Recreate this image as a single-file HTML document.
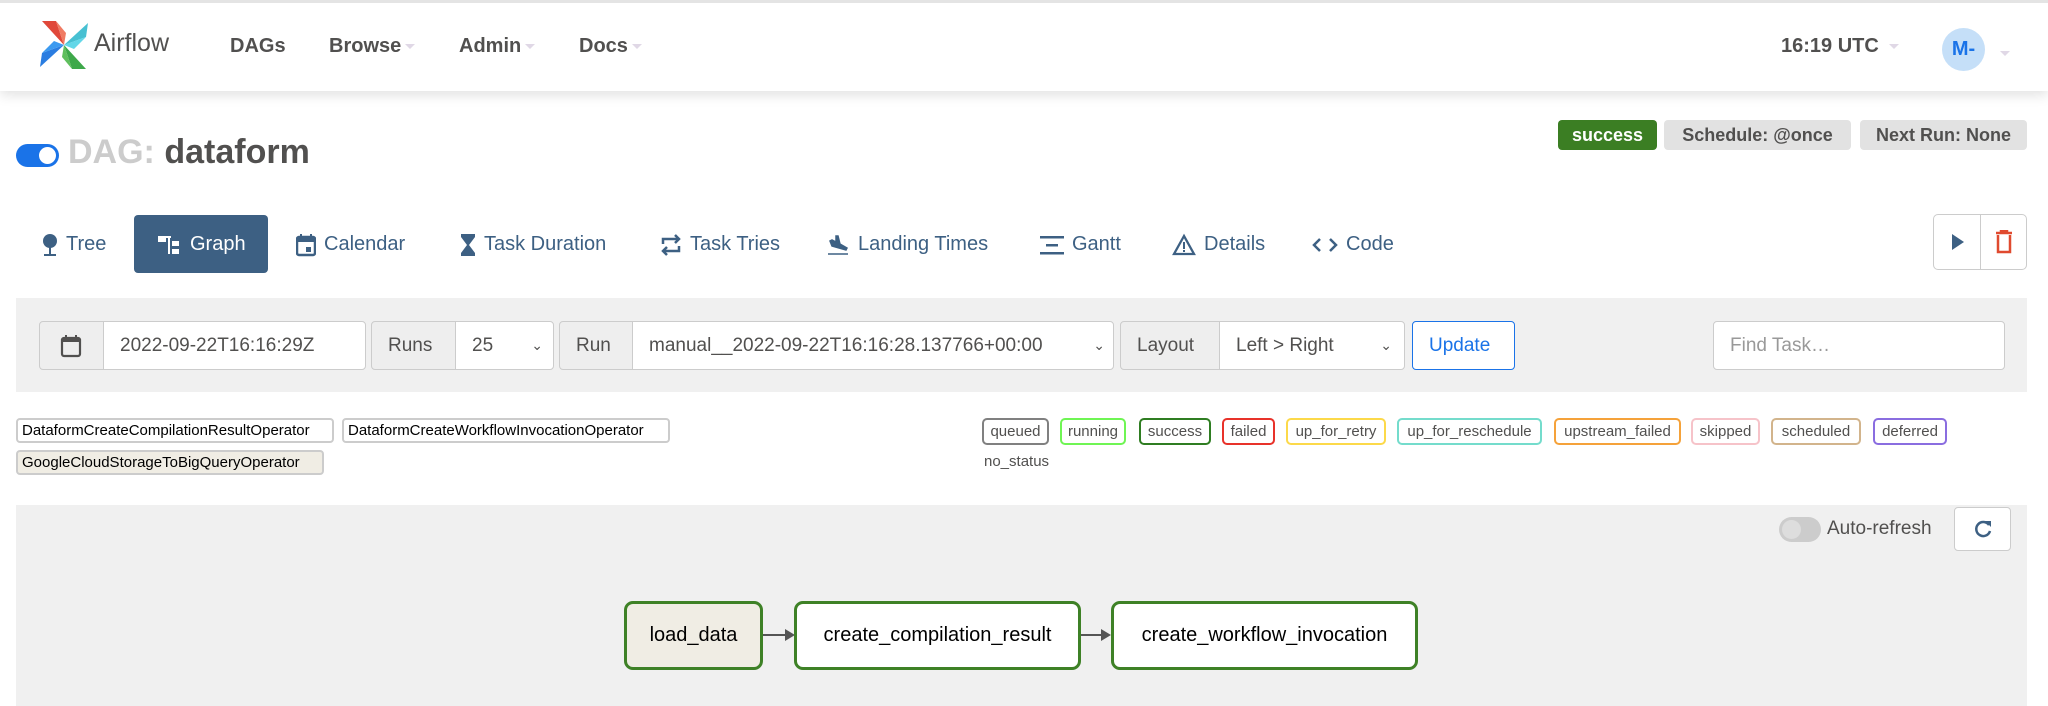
<!DOCTYPE html>
<html><head><meta charset="utf-8"><style>
*{box-sizing:border-box;margin:0;padding:0}
body{width:2048px;height:706px;overflow:hidden;background:#fff;font-family:"Liberation Sans",Arial,sans-serif;color:#51504f;position:relative}
.a{position:absolute}
.nav{left:0;top:0;width:2048px;height:91px;background:#fff;border-top:3px solid #e4e4e4;box-shadow:0 4px 12px rgba(0,0,0,.12)}
.ni{position:absolute;top:32px;font-size:20px;font-weight:bold;color:#51504f}
.car{display:inline-block;width:0;height:0;border-left:5px solid transparent;border-right:5px solid transparent;border-top:5px solid #e0d8e6;margin-left:4px;vertical-align:middle}
.badge{position:absolute;top:120px;height:30px;border-radius:4px;font-size:18px;font-weight:bold;line-height:30px;text-align:center}
.tab{position:absolute;top:215px;height:58px;line-height:58px;font-size:20px;color:#3d6083}
.tab svg{vertical-align:middle;margin-right:8px}
.grey{background:#f0f0f0}
.inp{position:absolute;top:321px;height:49px;border:1px solid #ccc;line-height:47px;font-size:19px;color:#51504f;padding-left:16px;background:#fff;border-radius:4px}
.add{background:#eee}
.op{position:absolute;height:25px;border:2px solid #ccc;border-radius:4px;font-size:15px;line-height:21px;padding:0 4px;color:#000;background:#fff}
.st{position:absolute;top:418px;height:27px;border:2px solid;border-radius:5px;font-size:15px;line-height:23px;text-align:center;color:#51504f;background:#fff}
.node{position:absolute;top:601px;height:69px;border:3px solid #3e8126;border-radius:9px;background:#fff;font-size:20px;line-height:63px;text-align:center;color:#000}
.arr{position:absolute;top:634px;height:2px;background:#555}
.ah{position:absolute;top:629px;width:0;height:0;border-top:6px solid transparent;border-bottom:6px solid transparent;border-left:10px solid #555}
</style></head><body>
<div class="a nav">
<svg class="a" style="left:38px;top:16px" width="52" height="52" viewBox="0 0 52 52">
<path d="M26 26 L4 2 L18 2 Z" fill="#e0483a"/><path d="M26 26 L18 2 L28 14 Z" fill="#f07b63"/>
<path d="M26 26 L50 4 L48 18 Z" fill="#47c0d2"/><path d="M26 26 L48 18 L36 30 Z" fill="#63d7e8"/>
<path d="M26 26 L48 50 L34 50 Z" fill="#3ea84a"/><path d="M26 26 L34 50 L24 38 Z" fill="#5fbf5d"/>
<path d="M26 26 L2 48 L4 34 Z" fill="#2a7de1"/><path d="M26 26 L4 34 L16 22 Z" fill="#3c9af0"/>
</svg>
<div class="a" style="left:94px;top:26px;font-size:25px;color:#51504f">Airflow</div>
<div class="ni" style="left:230px">DAGs</div>
<div class="ni" style="left:329px">Browse<span class="car"></span></div>
<div class="ni" style="left:459px">Admin<span class="car"></span></div>
<div class="ni" style="left:579px">Docs<span class="car"></span></div>
<div class="ni" style="left:1781px">16:19 UTC<span class="car" style="margin-left:10px"></span></div>
<div class="a" style="left:1942px;top:25px;width:43px;height:43px;border-radius:50%;background:#c5dff8;color:#1a73e8;font-weight:bold;font-size:20px;line-height:43px;text-align:center">M-</div>
<div class="a" style="left:1996px;top:42px"><span class="car"></span></div>
</div>
<div class="a" style="left:16px;top:144px;width:43px;height:23px;border-radius:12px;background:#1a73e8"><div class="a" style="right:3px;top:3px;width:17px;height:17px;border-radius:50%;background:#fff"></div></div>
<div class="a" style="left:68px;top:133px;font-size:34px;font-weight:bold;color:#51504f"><span style="color:#ccc">DAG:</span> dataform</div>
<div class="badge" style="left:1558px;width:99px;background:#3b7e23;color:#fff">success</div>
<div class="badge" style="left:1664px;width:187px;background:#e2e2e2;color:#51504f">Schedule: @once</div>
<div class="badge" style="left:1860px;width:167px;background:#e2e2e2;color:#51504f">Next Run: None</div>

<div class="tab" style="left:42px"><svg width="16" height="24" viewBox="0 0 16 24"><circle cx="8" cy="8" r="7" fill="#3d6083"/><rect x="7" y="14" width="2" height="8" fill="#3d6083"/><rect x="2" y="21" width="12" height="2" fill="#3d6083"/></svg>Tree</div>
<div class="tab" style="left:134px;width:134px;background:#3d6083;color:#fff;border-radius:4px;padding-left:24px"><svg width="24" height="22" viewBox="0 0 24 22"><rect x="0" y="2" width="8" height="6" fill="#fff"/><rect x="8" y="2" width="5" height="2" fill="#fff"/><rect x="10" y="2" width="2" height="18" fill="#fff"/><rect x="14" y="7" width="7" height="5" fill="#fff"/><rect x="14" y="15" width="7" height="5" fill="#fff"/></svg>Graph</div>
<div class="tab" style="left:296px"><svg width="20" height="24" viewBox="0 0 20 24"><rect x="1" y="4" width="18" height="18" rx="2" fill="none" stroke="#3d6083" stroke-width="2.5"/><rect x="1" y="4" width="18" height="5" fill="#3d6083"/><rect x="4" y="1" width="2" height="5" fill="#3d6083"/><rect x="14" y="1" width="2" height="5" fill="#3d6083"/><rect x="10" y="14" width="5" height="5" fill="#3d6083"/></svg>Calendar</div>
<div class="tab" style="left:460px"><svg width="16" height="24" viewBox="0 0 16 24"><path d="M1 1h14v3L9 12l6 8v3H1v-3l6-8L1 4z" fill="#3d6083"/></svg>Task Duration</div>
<div class="tab" style="left:660px"><svg width="22" height="24" viewBox="0 0 22 24"><path d="M3 11V6h15M15 2l4 4-4 4M19 13v5H4M7 22l-4-4 4-4" fill="none" stroke="#3d6083" stroke-width="2.5"/></svg>Task Tries</div>
<div class="tab" style="left:826px"><svg width="24" height="24" viewBox="0 0 24 24"><path d="M2 21h20M4 8l2 5 14 4 1-2-7-4-2-8-2 0 0 6-4-2z" fill="#3d6083" stroke="#3d6083" stroke-width="1.5"/></svg>Landing Times</div>
<div class="tab" style="left:1040px"><svg width="24" height="24" viewBox="0 0 24 24"><rect x="0" y="3" width="24" height="2.5" fill="#3d6083"/><rect x="6" y="11" width="12" height="2.5" fill="#3d6083"/><rect x="0" y="19" width="24" height="2.5" fill="#3d6083"/></svg>Gantt</div>
<div class="tab" style="left:1172px"><svg width="24" height="24" viewBox="0 0 24 24"><path d="M12 3L2 21h20z" fill="none" stroke="#3d6083" stroke-width="2.3"/><rect x="11" y="9" width="2" height="7" fill="#3d6083"/><rect x="11" y="17" width="2" height="2" fill="#3d6083"/></svg>Details</div>
<div class="tab" style="left:1312px"><svg width="26" height="24" viewBox="0 0 26 24"><path d="M8 6l-6 6 6 6M18 6l6 6-6 6" fill="none" stroke="#3d6083" stroke-width="2.5"/></svg>Code</div>
<div class="a" style="left:1933px;top:214px;width:94px;height:56px;border:1px solid #ccc;border-radius:5px"><div class="a" style="left:46px;top:0;width:1px;height:54px;background:#ccc"></div>
<svg class="a" style="left:16px;top:18px" width="16" height="20"><path d="M2 1l12 8-12 8z" fill="#3d6083"/></svg>
<svg class="a" style="left:61px;top:15px" width="18" height="24"><path d="M1 3h16M6 3V1h6v2M3 5v17h12V5" fill="none" stroke="#e04a2f" stroke-width="2.5"/></svg></div>

<div class="a grey" style="left:16px;top:298px;width:2011px;height:94px"></div>
<div class="inp add" style="left:39px;width:65px;border-radius:4px 0 0 4px;padding:0"><svg class="a" style="left:20px;top:12px" width="22" height="24" viewBox="0 0 22 24"><rect x="2" y="4" width="18" height="18" rx="2" fill="none" stroke="#51504f" stroke-width="2.2"/><rect x="2" y="4" width="18" height="4" fill="#51504f"/><rect x="5" y="1" width="2" height="5" fill="#51504f"/><rect x="15" y="1" width="2" height="5" fill="#51504f"/></svg></div>
<div class="inp" style="left:103px;width:263px;border-radius:0 4px 4px 0">2022-09-22T16:16:29Z</div>
<div class="inp add" style="left:371px;width:85px;border-radius:4px 0 0 4px">Runs</div>
<div class="inp" style="left:455px;width:99px;border-radius:0 4px 4px 0">25<span style="position:absolute;right:10px;font-size:14px">&#8964;</span></div>
<div class="inp add" style="left:559px;width:74px;border-radius:4px 0 0 4px">Run</div>
<div class="inp" style="left:632px;width:482px;border-radius:0 4px 4px 0">manual__2022-09-22T16:16:28.137766+00:00<span style="position:absolute;right:8px;font-size:14px">&#8964;</span></div>
<div class="inp add" style="left:1120px;width:100px;border-radius:4px 0 0 4px">Layout</div>
<div class="inp" style="left:1219px;width:186px;border-radius:0 4px 4px 0">Left &gt; Right<span style="position:absolute;right:12px;font-size:14px">&#8964;</span></div>
<div class="inp" style="left:1412px;width:103px;border-color:#1a73e8;color:#1a73e8">Update</div>
<div class="inp" style="left:1713px;width:292px;color:#999">Find Task…</div>

<div class="op" style="left:16px;top:418px;width:318px">DataformCreateCompilationResultOperator</div>
<div class="op" style="left:342px;top:418px;width:328px">DataformCreateWorkflowInvocationOperator</div>
<div class="op" style="left:16px;top:450px;width:308px;background:#f0ede4">GoogleCloudStorageToBigQueryOperator</div>

<div class="st" style="left:982px;width:67px;border-color:#808080">queued</div>
<div class="st" style="left:1060px;width:66px;border-color:#6ff554">running</div>
<div class="st" style="left:1139px;width:72px;border-color:#2f7d22">success</div>
<div class="st" style="left:1222px;width:53px;border-color:#e8322a">failed</div>
<div class="st" style="left:1286px;width:100px;border-color:#fcd94a">up_for_retry</div>
<div class="st" style="left:1397px;width:145px;border-color:#74dccc">up_for_reschedule</div>
<div class="st" style="left:1554px;width:127px;border-color:#f5a23a">upstream_failed</div>
<div class="st" style="left:1691px;width:69px;border-color:#f6c3c9">skipped</div>
<div class="st" style="left:1771px;width:90px;border-color:#d2b48c">scheduled</div>
<div class="st" style="left:1873px;width:74px;border-color:#8a6de0">deferred</div>
<div class="a" style="left:984px;top:453px;font-size:15px">no_status</div>

<div class="a grey" style="left:16px;top:505px;width:2011px;height:201px"></div>
<div class="a" style="left:1779px;top:517px;width:42px;height:25px;border-radius:13px;background:#ccc"><div class="a" style="left:3px;top:3px;width:19px;height:19px;border-radius:50%;background:#ddd"></div></div>
<div class="a" style="left:1827px;top:518px;font-size:19px;color:#51504f">Auto-refresh</div>
<div class="a" style="left:1954px;top:507px;width:57px;height:44px;border:1px solid #ccc;border-radius:4px;background:#fff"><svg class="a" style="left:18px;top:11px" width="20" height="20" viewBox="0 0 20 20"><path d="M16 6A7 7 0 1 0 17 12" fill="none" stroke="#3d6083" stroke-width="2.5"/><path d="M12 2h6v6z" fill="#3d6083"/></svg></div>

<div class="node" style="left:624px;width:139px;background:#f0ede4">load_data</div>
<div class="arr" style="left:763px;width:24px"></div><div class="ah" style="left:785px"></div>
<div class="node" style="left:794px;width:287px">create_compilation_result</div>
<div class="arr" style="left:1081px;width:22px"></div><div class="ah" style="left:1101px"></div>
<div class="node" style="left:1111px;width:307px">create_workflow_invocation</div>
</body></html>
